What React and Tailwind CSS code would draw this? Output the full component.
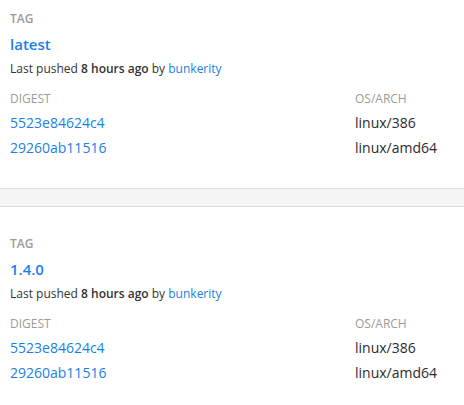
import React from "react";

const tags = [
  {
    name: "latest",
    pushed: "8 hours ago",
    user: "bunkerity",
    images: [
      { digest: "5523e84624c4", arch: "linux/386" },
      { digest: "29260ab11516", arch: "linux/amd64" },
    ],
  },
  {
    name: "1.4.0",
    pushed: "8 hours ago",
    user: "bunkerity",
    images: [
      { digest: "5523e84624c4", arch: "linux/386" },
      { digest: "29260ab11516", arch: "linux/amd64" },
    ],
  },
];

const TagCard = ({ tag }) => {
  return (
    <div className="px-[10px] pt-[28px] pb-[28px] bg-white">
      {/* Tag header */}
      <div className="text-[12px] leading-[18px] font-semibold text-[#9b9b9b] uppercase">
        Tag
      </div>
      <a href="#" className="block mt-[6px] text-[15px] leading-[20px] font-semibold text-[#1a7fe8]">
        {tag.name}
      </a>
      <div className="mt-[6px] text-[12px] leading-[18px] text-[#333]">
        Last pushed <span className="font-semibold">{tag.pushed}</span> by{" "}
        <a href="#" className="text-[#1a7fe8]">{tag.user}</a>
      </div>

      {/* Digest table */}
      <div className="mt-[12px] grid grid-cols-[345px_1fr]">
        <div className="text-[12px] leading-[18px] text-[#9b9b9b] uppercase">Digest</div>
        <div className="text-[12px] leading-[18px] text-[#9b9b9b] uppercase">OS/Arch</div>
      </div>
      <div className="mt-[2px]">
        {tag.images.map((img) => (
          <div key={img.arch} className="grid grid-cols-[345px_1fr] text-[14px] leading-[25px]">
            <a href="#" className="text-[#1a7fe8]">{img.digest}</a>
            <span className="text-[#2b2b2b]">{img.arch}</span>
          </div>
        ))}
      </div>
    </div>
  );
};

export default function App() {
  return (
    <div
      className="w-[464px] h-[405px] overflow-hidden bg-white"
      style={{ fontFamily: '"Open Sans", "Liberation Sans", sans-serif' }}
    >
      <div className="-mt-[18px]">
        {tags.map((tag, i) => (
          <React.Fragment key={tag.name}>
            {i > 0 && (
              <div className="h-[19px] bg-[#f5f5f5] border-y border-[#dddddd]" />
            )}
            <TagCard tag={tag} />
          </React.Fragment>
        ))}
      </div>
    </div>
  );
}
